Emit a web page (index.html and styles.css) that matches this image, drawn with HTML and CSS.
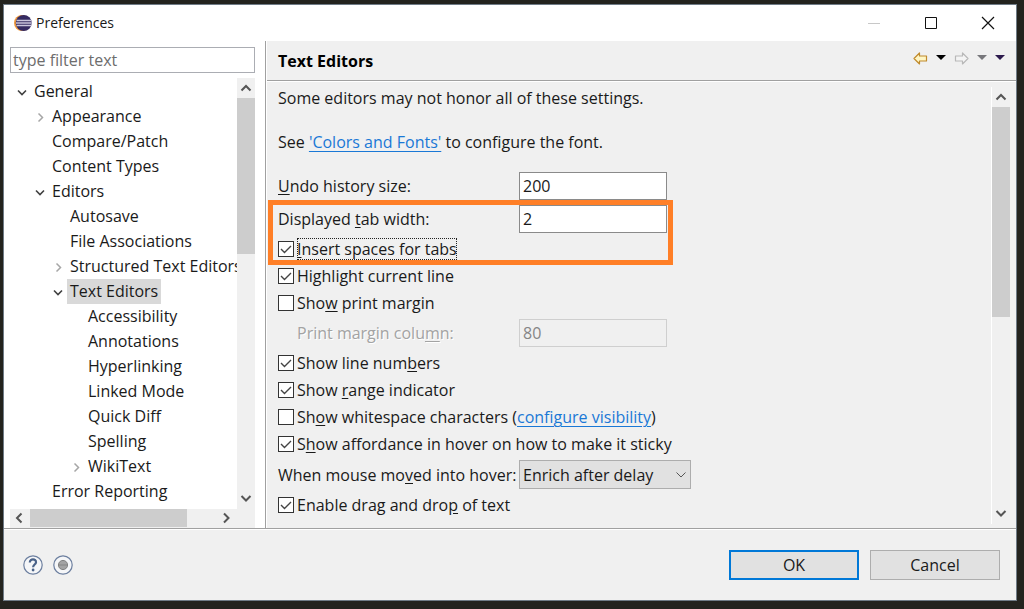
FILE: index.html
```html
<!DOCTYPE html>
<html lang="en">
<head>
<meta charset="utf-8">
<title>Preferences</title>
<link rel="stylesheet" href="styles.css">
</head>
<body>
<div class="window">
  <header class="titlebar">
    <svg class="app-icon" width="18" height="18" viewBox="0 0 18 18">
      <circle cx="8" cy="9" r="8" fill="#f0983a"/>
      <circle cx="9.700" cy="9" r="8" fill="#352b62"/>
      <path d="M2.500 6.500h14.500M2 9h15.500M2.500 11.500h14.500" stroke="#c9c5dc" stroke-width="1.400"/>
    </svg>
    <span class="title">Preferences</span>
    <div class="window-controls">
      <button aria-label="Minimize" disabled><svg width="14" height="14"><path d="M1 7.500h12" stroke="#c8c8c8"/></svg></button>
      <button aria-label="Maximize"><svg width="14" height="14"><path d="M1.500 1.500h11v11h-11z" fill="none" stroke="#111"/></svg></button>
      <button aria-label="Close"><svg width="14" height="14"><path d="M1 1l12 12M13 1L1 13" stroke="#111" stroke-width="1.200"/></svg></button>
    </div>
  </header>

  <div class="main">
    <aside class="sidebar">
      <input class="filter" type="text" placeholder="type filter text" aria-label="Filter">
      <div class="tree-area">
        <ul class="tree">
          <li class="l0"><svg class="tw"><use href="#open"/></svg><span>General</span></li>
          <li class="l1"><svg class="tw"><use href="#closed"/></svg><span>Appearance</span></li>
          <li class="l1"><i class="tw"></i><span>Compare/Patch</span></li>
          <li class="l1"><i class="tw"></i><span>Content Types</span></li>
          <li class="l1"><svg class="tw"><use href="#open"/></svg><span>Editors</span></li>
          <li class="l2"><i class="tw"></i><span>Autosave</span></li>
          <li class="l2"><i class="tw"></i><span>File Associations</span></li>
          <li class="l2"><svg class="tw"><use href="#closed"/></svg><span>Structured Text Editors</span></li>
          <li class="l2"><svg class="tw"><use href="#open"/></svg><span class="selected">Text Editors</span></li>
          <li class="l3"><i class="tw"></i><span>Accessibility</span></li>
          <li class="l3"><i class="tw"></i><span>Annotations</span></li>
          <li class="l3"><i class="tw"></i><span>Hyperlinking</span></li>
          <li class="l3"><i class="tw"></i><span>Linked Mode</span></li>
          <li class="l3"><i class="tw"></i><span>Quick Diff</span></li>
          <li class="l3"><i class="tw"></i><span>Spelling</span></li>
          <li class="l3"><svg class="tw"><use href="#closed"/></svg><span>WikiText</span></li>
          <li class="l1"><i class="tw"></i><span>Error Reporting</span></li>
        </ul>
        <div class="vbar">
          <svg class="arrow"><use href="#up"/></svg>
          <div class="track"><div class="thumb tree-thumb"></div></div>
          <svg class="arrow"><use href="#down"/></svg>
        </div>
        <div class="hbar">
          <svg class="arrow"><use href="#left"/></svg>
          <div class="track"><div class="thumb wide-thumb"></div></div>
          <svg class="arrow"><use href="#right"/></svg>
        </div>
        <div class="corner"></div>
      </div>
    </aside>

    <section class="page">
      <div class="page-head">
        <h1>Text Editors</h1>
        <div class="nav">
          <button aria-label="Back"><svg width="15" height="13"><path d="M1 6.500L6.500 1v3H13.500v5H6.500v3z" fill="#fff6c4" stroke="#c08a2c" stroke-width="1.200" stroke-linejoin="round"/></svg></button>
          <button aria-label="Back history"><svg width="10" height="6"><path d="M0 0h10L5 5z" fill="#000"/></svg></button>
          <button aria-label="Forward"><svg width="15" height="13"><path d="M14 6.500L8.500 1v3H1.500v5h7v3z" fill="#f4f4f4" stroke="#b8b8b8" stroke-width="1.200" stroke-linejoin="round"/></svg></button>
          <button aria-label="Forward history"><svg width="10" height="6"><path d="M0 0h10L5 5z" fill="#77777b"/></svg></button>
          <button aria-label="Menu"><svg width="10" height="6"><path d="M0 0h10L5 5z" fill="#2c1a4d"/></svg></button>
        </div>
      </div>
      <div class="page-body">
        <form class="form">
          <p>Some editors may not honor all of these settings.</p>
          <p class="fonts-note">See <a href="#">'Colors and Fonts'</a> to configure the font.</p>
          <div class="field"><label for="undo"><u>U</u>ndo history size:</label><input class="box" id="undo" type="text" value="200"></div>
          <div class="callout">
            <div class="field"><label for="tab">Displayed <u>t</u>ab width:</label><input class="box" id="tab" type="text" value="2"></div>
            <div class="check"><input type="checkbox" id="c1" checked><label for="c1" class="focused"><u>I</u>nsert spaces for tabs</label></div>
          </div>
          <div class="check"><input type="checkbox" id="c2" checked><label for="c2">Hi<u>g</u>hlight current line</label></div>
          <div class="check"><input type="checkbox" id="c3"><label for="c3">Sho<u>w</u> print margin</label></div>
          <div class="field off"><label for="col">Print margin colu<u>m</u>n:</label><input class="box" id="col" type="text" value="80" disabled></div>
          <div class="check"><input type="checkbox" id="c4" checked><label for="c4">Show line num<u>b</u>ers</label></div>
          <div class="check"><input type="checkbox" id="c5" checked><label for="c5">Show <u>r</u>ange indicator</label></div>
          <div class="check"><input type="checkbox" id="c6"><label for="c6">Sh<u>o</u>w whitespace characters (</label><a href="#">configure visibility</a>)</div>
          <div class="check"><input type="checkbox" id="c7" checked><label for="c7">S<u>h</u>ow affordance in hover on how to make it sticky</label></div>
          <div class="field"><label for="hover">When mouse mo<u>v</u>ed into hover:</label><select id="hover"><option>Enrich after delay</option></select></div>
          <div class="check"><input type="checkbox" id="c8" checked><label for="c8">Enable drag and dro<u>p</u> of text</label></div>
        </form>
        <div class="vbar page-bar">
          <svg class="arrow"><use href="#up"/></svg>
          <div class="track"><div class="thumb page-thumb"></div></div>
          <svg class="arrow"><use href="#down"/></svg>
        </div>
      </div>
    </section>
  </div>

  <footer class="footer">
    <button class="round" aria-label="Help"><svg width="20" height="20"><circle cx="10" cy="10" r="9.200" fill="#f5f6f8" stroke="#6c7f9f" stroke-width="1.200"/><path d="M6.800 7.500C6.800 3.300 13.300 3.600 13 7.300c-.2 2.200-2.900 2.300-2.900 4.900" fill="none" stroke="#4a6288" stroke-width="2.200"/><circle cx="10.100" cy="15" r="1.400" fill="#4a6288"/></svg></button>
    <button class="round" aria-label="Record"><svg width="20" height="20"><circle cx="10" cy="10" r="9.200" fill="#f5f6f8" stroke="#6c7f9f" stroke-width="1.200"/><circle cx="10" cy="10" r="4.600" fill="#a3a3a3" stroke="#828282"/><path d="M6 10h8" stroke="#858585"/></svg></button>
    <div class="actions">
      <button class="action primary">OK</button>
      <button class="action">Cancel</button>
    </div>
  </footer>
</div>

<svg class="symbols" aria-hidden="true">
  <symbol id="open" viewBox="0 0 12 12"><path d="M2 4.500l4 4 4-4" fill="none" stroke="#404040" stroke-width="1.600"/></symbol>
  <symbol id="closed" viewBox="0 0 12 12"><path d="M4.500 2.500l4 4-4 4" fill="none" stroke="#a6a6a6" stroke-width="1.500"/></symbol>
  <symbol id="up" viewBox="0 0 18 20"><path d="M4.500 12.500L9 8l4.500 4.500" fill="none" stroke="#555" stroke-width="2"/></symbol>
  <symbol id="down" viewBox="0 0 18 20"><path d="M4.500 7L9 11.500 13.500 7" fill="none" stroke="#555" stroke-width="2"/></symbol>
  <symbol id="left" viewBox="0 0 20 18"><path d="M11.500 4.500L7 9l4.500 4.500" fill="none" stroke="#555" stroke-width="2"/></symbol>
  <symbol id="right" viewBox="0 0 20 18"><path d="M7 4.500l4.500 4.500L7 13.500" fill="none" stroke="#555" stroke-width="2"/></symbol>
</svg>
</body>
</html>
```

FILE: styles.css
```css
* { box-sizing: border-box; }
body {
  margin: 0;
  height: 100vh;
  padding: 4px 7px 8px 3px;
  background: #23231e;
  color: #1a1a1a;
  font: 16px/22px "Open Sans", "Noto Sans", sans-serif;
}
button { padding: 0; border: 0; background: none; font: inherit; color: inherit; }
svg { display: block; }
a { color: #1a78d6; text-decoration: underline; text-underline-offset: 3px; }
u { text-underline-offset: 2px; }
.symbols { position: absolute; width: 0; height: 0; }

.window {
  display: flex;
  flex-direction: column;
  height: 100%;
  background: #f0f0f0;
  border: 1px solid #6f7b86;
}
.titlebar {
  display: flex;
  align-items: center;
  height: 36px;
  padding-left: 10px;
  gap: 4px;
  background: #fff;
  font-size: 14px;
  flex: none;
}
.window-controls { display: flex; margin-left: auto; }
.window-controls button { display: grid; place-items: center; width: 57px; height: 34px; }

.main { display: flex; flex: 1; min-height: 0; border-bottom: 1px solid #a0a0a0; }
.sidebar {
  display: flex;
  flex-direction: column;
  gap: 5px;
  width: 262px;
  padding: 6px 10px 0 6px;
  background: #fff;
  border-right: 1px solid #a0a0a0;
}
.filter {
  height: 26px;
  padding: 0 2px;
  border: 1px solid #abadb3;
  font: inherit;
  flex: none;
}
.filter::placeholder { color: #6d6d6d; }
.tree-area {
  display: grid;
  flex: 1;
  min-height: 0;
  grid-template: minmax(0, 1fr) 19px / minmax(0, 1fr) 18px;
}
.tree { margin: 0; padding: 1px 0 0; list-style: none; overflow: hidden; white-space: nowrap; }
.tree li { display: flex; align-items: center; height: 25px; }
.tree span { padding: 0 3px; line-height: 25px; }
.tree .selected { background: #d9d9d9; }
.tw { width: 12px; height: 12px; margin-right: 3px; flex: none; }
.l0 { padding-left: 6px; }
.l1 { padding-left: 24px; }
.l2 { padding-left: 42px; }
.l3 { padding-left: 60px; }

.vbar, .hbar { display: flex; background: #f0f0f0; }
.vbar { flex-direction: column; }
.vbar .arrow { width: 18px; height: 20px; flex: none; }
.hbar .arrow { width: 20px; height: 18px; flex: none; }
.track { flex: 1; }
.thumb { background: #cdcdcd; }
.vbar .thumb { width: 18px; }
.tree-thumb { height: 40%; }
.page-thumb { height: 53%; }
.hbar .thumb { height: 18px; }
.wide-thumb { width: 84%; }
.corner { background: #f0f0f0; }

.page { display: flex; flex-direction: column; flex: 1; min-width: 0; border-left: 1px solid #fff; }
.page-head {
  display: flex;
  align-items: center;
  justify-content: space-between;
  height: 40px;
  padding: 1px 11px 0;
  border-bottom: 1px solid #a0a0a0;
  box-shadow: 0 1px #fff;
  flex: none;
}
h1 { margin: 0; font-size: 16px; line-height: 22px; color: #000; }
.nav { display: flex; align-items: center; gap: 8px; padding-bottom: 6px; }
.page-body { display: flex; flex: 1; min-height: 0; padding: 6px 6px 4px 11px; }
.form { display: flex; flex-direction: column; gap: 5px; flex: 1; min-width: 0; }
.form p { margin: 0; }
.form .fonts-note { margin: 17px 0 14px; }
.field { display: flex; align-items: center; }
.field label { width: 241px; white-space: nowrap; }
.box { width: 148px; height: 28px; padding: 0 3px; border: 1px solid #8a8a8a; background: #fff; font: inherit; color: inherit; }
.off { color: #a3a3a3; text-shadow: 1px 1px #fff; }
.off label { padding-left: 19px; }
.box:disabled { background: #f0f0f0; border-color: #cfcfcf; color: #858585; }
.check { display: flex; align-items: center; height: 22px; white-space: nowrap; }
.check input {
  appearance: none;
  width: 16px;
  height: 16px;
  margin: 0 3px 0 0;
  border: 1px solid #333;
  background: #fff;
  flex: none;
}
.check input:checked {
  background: #fff url("data:image/svg+xml,%3Csvg xmlns='http://www.w3.org/2000/svg' width='14' height='14'%3E%3Cpath d='M2 7l3.500 3.500L12 4' fill='none' stroke='%23444' stroke-width='1.400'/%3E%3C/svg%3E") center no-repeat;
}
.focused { outline: 1px dotted #222; outline-offset: -1px; }
.callout { position: relative; display: grid; gap: 5px; width: 389px; }
.callout::after {
  content: "";
  position: absolute;
  inset: -5px -6px -5px -10px;
  border: 5px solid #ff7f27;
  pointer-events: none;
}
select {
  appearance: none;
  width: 172px;
  height: 29px;
  padding: 0 3px;
  border: 1px solid #adadad;
  border-radius: 0;
  background: #e1e1e1 url("data:image/svg+xml,%3Csvg xmlns='http://www.w3.org/2000/svg' width='10' height='6'%3E%3Cpath d='M.5 .5L5 5 9.500 .5' fill='none' stroke='%23555'/%3E%3C/svg%3E") right 4px center no-repeat;
  font: inherit;
  color: inherit;
}
.page-bar { border-left: 1px solid #fff; width: 19px; }

.footer {
  display: flex;
  align-items: center;
  gap: 10px;
  height: 71px;
  padding: 0 16px 0 19px;
  border-top: 1px solid #fff;
  flex: none;
}
.actions { display: flex; gap: 11px; margin-left: auto; }
.action { width: 130px; height: 30px; border: 1px solid #adadad; background: #e1e1e1; }
.primary { border: 2px solid #0078d7; }
```
